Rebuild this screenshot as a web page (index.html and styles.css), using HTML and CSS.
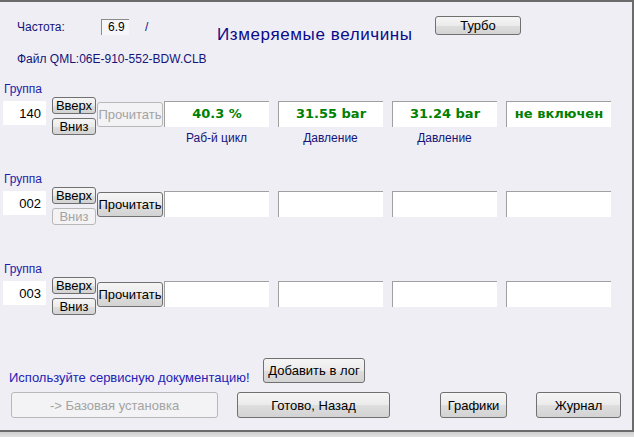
FILE: index.html
```html
<!DOCTYPE html>
<html lang="ru">

<head>
    <meta charset="UTF-8">
    <title>Измеряемые величины</title>
    <link rel="stylesheet" href="styles.css">
</head>

<body>
    <div class="window">
        <!-- Header -->
        <div class="header">
            <span class="freq-label">Частота:</span>
            <span class="freq-box">6.9</span>
            <span class="slash">/</span>
            <h1 class="title">Измеряемые величины</h1>
            <button class="btn turbo">Турбо</button>
        </div>
        <div class="file">Файл QML:06E-910-552-BDW.CLB</div>

        <!-- Groups -->
        <div class="groups">
            <div class="group">
                <div class="group-label">Группа</div>
                <div class="group-body">
                    <input class="group-num" type="text" value="140">
                    <div class="updown">
                        <button class="btn small">Вверх</button>
                        <button class="btn small">Вниз</button>
                    </div>
                    <button class="btn read" disabled>Прочитать</button>
                    <div class="cells">
                        <div class="cell"><div class="value">40.3 %</div><div class="caption">Раб-й цикл</div></div>
                        <div class="cell"><div class="value">31.55 bar</div><div class="caption">Давление</div></div>
                        <div class="cell"><div class="value">31.24 bar</div><div class="caption">Давление</div></div>
                        <div class="cell"><div class="value">не включен</div></div>
                    </div>
                </div>
            </div>

            <div class="group">
                <div class="group-label">Группа</div>
                <div class="group-body">
                    <input class="group-num" type="text" value="002">
                    <div class="updown">
                        <button class="btn small">Вверх</button>
                        <button class="btn small" disabled>Вниз</button>
                    </div>
                    <button class="btn read">Прочитать</button>
                    <div class="cells">
                        <div class="cell"><div class="value"></div></div>
                        <div class="cell"><div class="value"></div></div>
                        <div class="cell"><div class="value"></div></div>
                        <div class="cell"><div class="value"></div></div>
                    </div>
                </div>
            </div>

            <div class="group">
                <div class="group-label">Группа</div>
                <div class="group-body">
                    <input class="group-num" type="text" value="003">
                    <div class="updown">
                        <button class="btn small">Вверх</button>
                        <button class="btn small">Вниз</button>
                    </div>
                    <button class="btn read">Прочитать</button>
                    <div class="cells">
                        <div class="cell"><div class="value"></div></div>
                        <div class="cell"><div class="value"></div></div>
                        <div class="cell"><div class="value"></div></div>
                        <div class="cell"><div class="value"></div></div>
                    </div>
                </div>
            </div>
        </div>

        <!-- Footer -->
        <div class="footer-top">
            <span class="note">Используйте сервисную документацию!</span>
            <button class="btn add-log">Добавить в лог</button>
        </div>
        <div class="footer-bottom">
            <button class="btn wide base" disabled>-&gt; Базовая установка</button>
            <button class="btn wide done">Готово, Назад</button>
            <button class="btn wide graphs">Графики</button>
            <button class="btn wide journal">Журнал</button>
        </div>
    </div>
    <div class="strip"></div>
</body>

</html>
```

FILE: styles.css
```css
/* Reset */
* {
    margin: 0;
    padding: 0;
    box-sizing: border-box;
}

:root {
    --bg: #efeef4;
    --navy: #14147a;
    --blue: #1e1eaa;
    --green: #008000;
    --frame: #6b6b6b;
}

body {
    font-family: 'Liberation Sans', Arial, sans-serif;
    font-size: 12px;
    background: var(--bg);
    color: #000;
    overflow: hidden;
}

.window {
    width: 634px;
    height: 432px;
    background: var(--bg);
    border-top: 2px solid var(--frame);
    border-right: 2px solid var(--frame);
    border-bottom: 2px solid var(--frame);
}

.strip {
    height: 5px;
    background: linear-gradient(#cfcfcf, #e2e2e2);
}

/* Buttons */
.btn {
    font-family: 'Liberation Sans', Arial, sans-serif;
    font-size: 13px;
    color: #000;
    border: 1px solid #707070;
    border-radius: 3px;
    background: linear-gradient(#f5f5f5, #ebebeb 50%, #dedede 51%, #d3d3d3);
}

.btn:disabled {
    color: #a3a3a3;
    border-color: #b8b8b8;
    background: #f3f3f5;
}

/* Header */
.header {
    display: flex;
    align-items: flex-start;
    height: 38px;
}

.freq-label {
    margin: 18px 0 0 17px;
    width: 84px;
    line-height: 14px;
    color: var(--navy);
}

.freq-box {
    margin-top: 17px;
    width: 28px;
    height: 16px;
    padding-left: 6px;
    line-height: 15px;
    border-top: 1px solid #8a8a8a;
    border-left: 1px solid #8a8a8a;
    background: #f6f6f9;
}

.slash {
    margin: 18px 0 0 16px;
    width: 4px;
    line-height: 14px;
    color: var(--navy);
}

.title {
    margin: 23px 0 0 68px;
    width: 218px;
    font-size: 17px;
    font-weight: normal;
    line-height: 20px;
    letter-spacing: 0.6px;
    color: #0a0a8a;
}

.turbo {
    margin-top: 14px;
    width: 86px;
    height: 19px;
}

.file {
    margin: 12px 0 0 17px;
    line-height: 14px;
    color: var(--navy);
}

/* Groups */
.groups {
    margin-top: 16px;
}

.group {
    height: 90px;
}

.group-label {
    padding-left: 4px;
    line-height: 14px;
    color: var(--blue);
}

.group-body {
    display: flex;
    align-items: flex-start;
    margin-top: 1px;
}

.group-num {
    margin: 4px 0 0 3px;
    width: 43px;
    height: 24px;
    padding-right: 5px;
    border: none;
    background: #fff;
    text-align: right;
    font-family: 'Liberation Sans', Arial, sans-serif;
    font-size: 13px;
}

.updown {
    display: flex;
    flex-direction: column;
    gap: 4px;
    margin-left: 6px;
}

.small {
    width: 44px;
    height: 17px;
    line-height: 15px;
}

.read {
    margin: 5px 0 0 1px;
    width: 66px;
    height: 25px;
}

.cells {
    display: flex;
    gap: 9px;
    margin: 4px 0 0 1px;
}

.cell {
    width: 105px;
    display: flex;
    flex-direction: column;
    align-items: center;
}

.value {
    width: 100%;
    height: 26px;
    background: #fff;
    border-top: 1px solid #a0a0a0;
    border-left: 1px solid #a0a0a0;
    text-align: center;
    line-height: 24px;
    font-family: 'DejaVu Sans', Verdana, sans-serif;
    font-size: 13px;
    font-weight: bold;
    color: var(--green);
}

.caption {
    margin-top: 4px;
    line-height: 14px;
    color: var(--navy);
}

/* Footer */
.footer-top {
    display: flex;
    align-items: flex-start;
    height: 25px;
    margin-top: 6px;
}

.note {
    margin: 12px 0 0 9px;
    width: 254px;
    font-size: 13px;
    line-height: 15px;
    color: #2323b4;
}

.add-log {
    width: 102px;
    height: 25px;
}

.footer-bottom {
    display: flex;
    margin-top: 9px;
}

.wide {
    height: 26px;
}

.base {
    margin-left: 11px;
    width: 207px;
}

.done {
    margin-left: 19px;
    width: 153px;
}

.graphs {
    margin-left: 50px;
    width: 67px;
}

.journal {
    margin-left: 29px;
    width: 85px;
}
```
